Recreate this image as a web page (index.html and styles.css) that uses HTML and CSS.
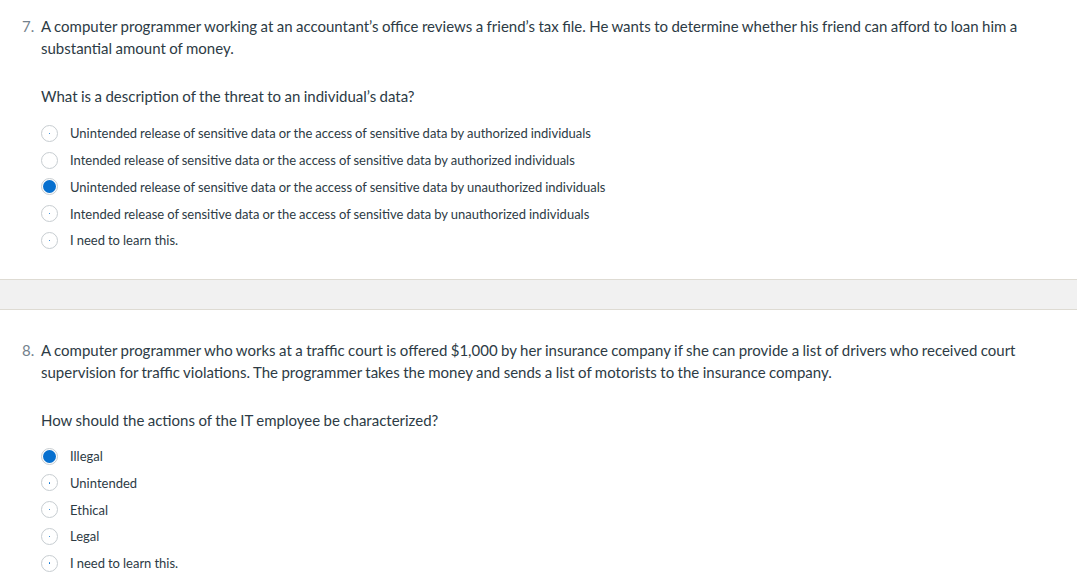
FILE: index.html
```html
<!DOCTYPE html>
<html>
<head>
<meta charset="utf-8">
<link rel="stylesheet" href="styles.css">
</head>
<body>
<section class="question q7">
  <div class="stem">
    <span class="num">7.</span>
    <p class="text">A computer programmer working at an accountant’s office reviews a friend’s tax file. He wants to determine whether his friend can afford to loan him a substantial amount of money.</p>
  </div>
  <p class="prompt">What is a description of the threat to an individual’s data?</p>
  <ul class="options">
    <li><span class="radio dot"></span>Unintended release of sensitive data or the access of sensitive data by authorized individuals</li>
    <li><span class="radio"></span>Intended release of sensitive data or the access of sensitive data by authorized individuals</li>
    <li><span class="radio checked"></span>Unintended release of sensitive data or the access of sensitive data by unauthorized individuals</li>
    <li><span class="radio dot"></span>Intended release of sensitive data or the access of sensitive data by unauthorized individuals</li>
    <li><span class="radio dot"></span>I need to learn this.</li>
  </ul>
</section>
<div class="divider"></div>
<section class="question q8">
  <div class="stem">
    <span class="num">8.</span>
    <p class="text">A computer programmer who works at a traffic court is offered $1,000 by her insurance company if she can provide a list of drivers who received court supervision for traffic violations. The programmer takes the money and sends a list of motorists to the insurance company.</p>
  </div>
  <p class="prompt">How should the actions of the IT employee be characterized?</p>
  <ul class="options">
    <li><span class="radio checked"></span>Illegal</li>
    <li><span class="radio dot"></span>Unintended</li>
    <li><span class="radio dot"></span>Ethical</li>
    <li><span class="radio dot"></span>Legal</li>
    <li><span class="radio dot"></span>I need to learn this.</li>
  </ul>
</section>
</body>
</html>
```

FILE: styles.css
```css
html, body {
  margin: 0;
  padding: 0;
  background: #ffffff;
}
body {
  font-family: Lato, "Open Sans", sans-serif;
  color: #2d3b45;
  width: 1077px;
  overflow: hidden;
}
.question {
  padding: 0 40px 0 22px;
}
.q7 {
  padding-top: 15px;
  padding-bottom: 25px;
}
.q8 {
  padding-top: 29px;
}
.stem {
  display: flex;
}
.num {
  width: 19px;
  flex: none;
  color: #73818c;
  font-size: 15px;
  line-height: 22px;
}
.text {
  margin: 0;
  font-size: 15px;
  line-height: 22px;
  word-spacing: -0.4px;
}
.prompt {
  margin: 26px 0 0 19px;
  font-size: 15px;
  line-height: 22px;
  word-spacing: -0.4px;
}
.options {
  list-style: none;
  margin: 13px 0 0 19px;
  padding: 0;
}
.q8 .options {
  margin-top: 12px;
}
.options li {
  display: flex;
  align-items: center;
  height: 26.75px;
  font-size: 13px;
  word-spacing: -0.3px;
}
.radio {
  box-sizing: border-box;
  width: 17px;
  height: 17px;
  border: 1px solid #c7cdd1;
  border-radius: 50%;
  margin-right: 12px;
  flex: none;
  display: flex;
  align-items: center;
  justify-content: center;
  background: #fff;
}
.radio.dot::after {
  content: "";
  width: 1.5px;
  height: 1.5px;
  border-radius: 50%;
  background: #0770cf;
}
.radio.checked::after {
  content: "";
  width: 13px;
  height: 13px;
  border-radius: 50%;
  background: #0770cf;
}
.divider {
  height: 29px;
  background: #f1f1f1;
  border-top: 1px solid #dedbd3;
  border-bottom: 1px solid #dedbd3;
}
```
